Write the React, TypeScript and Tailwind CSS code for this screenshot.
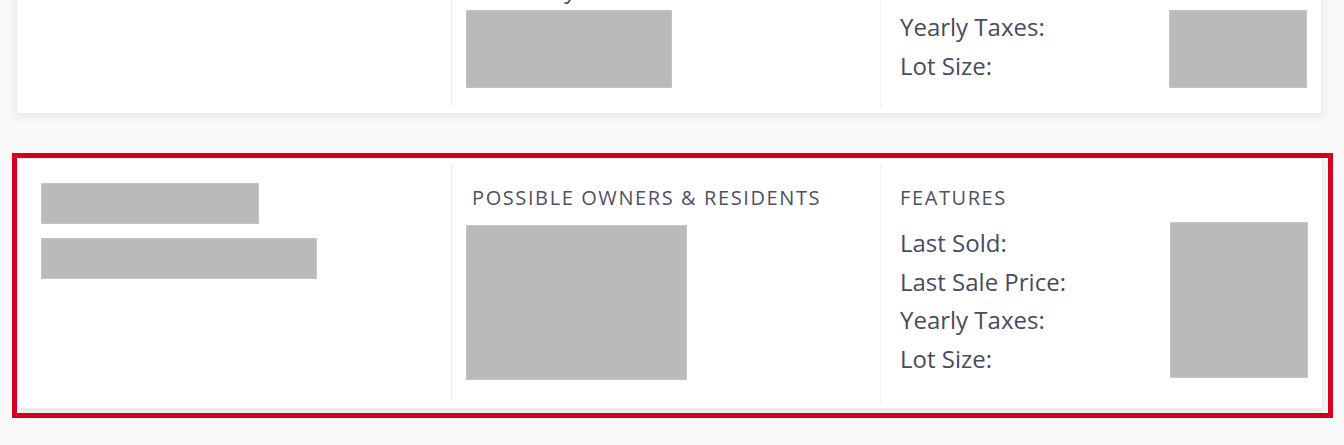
import React from 'react';

const featureLabels = ['Last Sold:', 'Last Sale Price:', 'Yearly Taxes:', 'Lot Size:'];

const Placeholder: React.FC<{ className?: string }> = ({ className = '' }) => (
    <div className={`bg-[#bababa] border border-[#c4c4c4] ${className}`} />
);

const FeatureList: React.FC<{ className?: string }> = ({ className = '' }) => (
    <ul className={`text-[24px] leading-[38.5px] text-[#4a4b5c] ${className}`}>
        {featureLabels.map((label) => (
            <li key={label}>{label}</li>
        ))}
    </ul>
);

const SectionTitle: React.FC<{ children: React.ReactNode; className?: string }> = ({ children, className = '' }) => (
    <h3 className={`text-[20px] leading-7 tracking-[0.08em] uppercase text-[#4f5061] ${className}`}>{children}</h3>
);

export default function App() {
    return (
        <div
            className="h-[445px] overflow-hidden bg-[#f9f9fa]"
            style={{ fontFamily: '"Open Sans", "Noto Sans", sans-serif' }}
        >
            <div className="-mt-[134px]">
                {/* Previous listing card, mostly scrolled out of view */}
                <div className="ml-4 w-[1306px] bg-white border border-[#ebebf0] shadow-[0_3px_8px_rgba(70,70,110,0.10)] py-[6px] grid grid-cols-[434px_429px_1fr]">
                    <div />
                    <div className="border-l border-[#efeff3] pl-[14px] pb-[19px] flex flex-col justify-end">
                        <SectionTitle className="pl-[6px]">Possible Owners &amp; Residents</SectionTitle>
                        <p className="pl-[6px] mt-[13px] text-[24px] leading-[38.5px] text-[#4a4b5c]">Currently unavailable</p>
                        <Placeholder className="mt-[2px] w-[206px] h-[78px]" />
                    </div>
                    <div className="border-l border-[#efeff3] pl-[19px] pr-[14px] pt-5 pb-[19px] flex flex-col justify-end">
                        <SectionTitle>Features</SectionTitle>
                        <div className="mt-[10px] flex items-end">
                            <FeatureList className="pb-[3px]" />
                            <Placeholder className="ml-auto w-[138px] h-[78px]" />
                        </div>
                    </div>
                </div>

                {/* Highlighted listing card */}
                <div className="mt-[39px] ml-[12px] w-[1321px] border-[5px] border-[#d3021f] pr-[5px] pb-[4px]">
                    <div className="w-[1306px] bg-white border border-[#ebebf0] shadow-[0_3px_8px_rgba(70,70,110,0.10)] py-[5px] grid grid-cols-[433px_429px_1fr]">
                        <div className="pl-[23px] pt-[19px] flex flex-col gap-[14px]">
                            <Placeholder className="w-[218px] h-[41px]" />
                            <Placeholder className="w-[276px] h-[41px]" />
                        </div>
                        <div className="border-l border-[#efeff3] pl-[14px] pt-5 pb-[23px]">
                            <SectionTitle className="pl-[6px]">Possible Owners &amp; Residents</SectionTitle>
                            <Placeholder className="mt-[13px] w-[221px] h-[155px]" />
                        </div>
                        <div className="border-l border-[#efeff3] pl-[19px] pr-[14px] pt-5 pb-[23px]">
                            <SectionTitle>Features</SectionTitle>
                            <div className="mt-[10px] flex items-end">
                                <FeatureList />
                                <Placeholder className="ml-auto w-[138px] h-[156px]" />
                            </div>
                        </div>
                    </div>
                </div>
            </div>
        </div>
    );
}
